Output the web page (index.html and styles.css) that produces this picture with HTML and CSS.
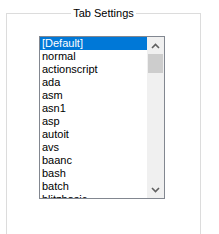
FILE: index.html
```html
<!DOCTYPE html>
<html lang="en">

<head>
    <meta charset="UTF-8">
    <title>Tab Settings</title>
    <link rel="stylesheet" href="styles.css">
</head>

<body>
    <fieldset class="group">
        <legend>Tab Settings</legend>
        <div class="listbox">
            <ul class="items">
                <li class="selected">[Default]</li>
                <li>normal</li>
                <li>actionscript</li>
                <li>ada</li>
                <li>asm</li>
                <li>asn1</li>
                <li>asp</li>
                <li>autoit</li>
                <li>avs</li>
                <li>baanc</li>
                <li>bash</li>
                <li>batch</li>
                <li>blitzbasic</li>
            </ul>
            <div class="scrollbar">
                <div class="arrow">
                    <svg width="9" height="6" viewBox="0 0 9 6"><path d="M1 5 L4.5 1.5 L8 5" fill="none" stroke="#606060" stroke-width="1.6"/></svg>
                </div>
                <div class="track">
                    <div class="thumb"></div>
                </div>
                <div class="arrow">
                    <svg width="9" height="6" viewBox="0 0 9 6"><path d="M1 1 L4.5 4.5 L8 1" fill="none" stroke="#606060" stroke-width="1.6"/></svg>
                </div>
            </div>
        </div>
    </fieldset>
</body>

</html>
```

FILE: styles.css
```css
body {
    margin: 0;
    background: #ffffff;
    font-family: 'Liberation Sans', Arial, sans-serif;
    font-size: 11px;
    color: #000000;
    overflow: hidden;
}

.group {
    margin: 5px 0 0 6px;
    width: 195px;
    height: 260px;
    box-sizing: border-box;
    border: 1px solid #dcdcdc;
    padding: 15px 0 0 0;
}

.group legend {
    margin: 0 auto;
    padding: 0 2px;
    line-height: 16px;
    font-size: 11px;
}

.listbox {
    display: flex;
    width: 126px;
    height: 163px;
    margin-left: 32px;
    box-sizing: border-box;
    border: 1px solid #828790;
    overflow: hidden;
}

.items {
    flex: 1;
    list-style: none;
    margin: 0;
    padding: 0;
    overflow: hidden;
}

.items li {
    height: 13px;
    line-height: 13px;
    padding-left: 2px;
    white-space: nowrap;
}

.items li.selected {
    background: #0078d7;
    color: #ffffff;
}

.scrollbar {
    width: 17px;
    display: flex;
    flex-direction: column;
    background: #f0f0f0;
}

.arrow {
    height: 17px;
    display: flex;
    justify-content: center;
    align-items: center;
}

.track {
    flex: 1;
    padding: 0 1px;
}

.thumb {
    height: 19px;
    background: #cdcdcd;
}
```
